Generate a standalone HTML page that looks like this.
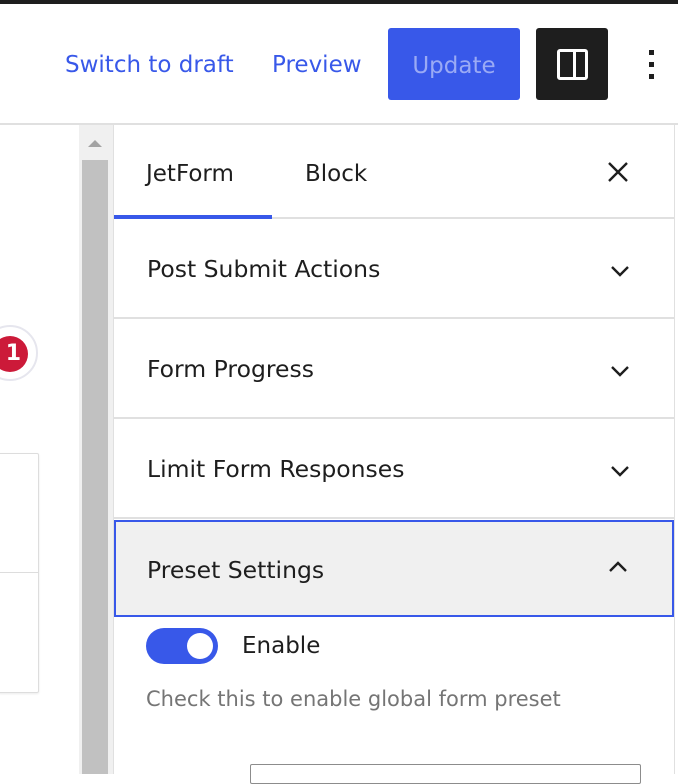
<!DOCTYPE html>
<html><head><style>
*{margin:0;padding:0;box-sizing:border-box}
body{width:678px;height:774px;overflow:hidden;background:#fff;font-family:"DejaVu Sans","Liberation Sans",sans-serif;position:relative;color:#1e1e1e}
.a{position:absolute}
.row{position:absolute;left:114px;width:560px;height:100px;border-bottom:2px solid #e0e0e0}
.row span{position:absolute;left:33px;top:36px;font-size:23.5px}
.chev{position:absolute;right:44px;top:46px}
</style></head><body>
<div class="a" style="left:0;top:0;width:678px;height:4px;background:#1e1e1e"></div>
<div class="a" style="left:0;top:123px;width:678px;height:2px;background:#e0e0e0"></div>
<div class="a" style="left:65px;top:52px;font-size:23px;color:#3858e9">Switch to draft</div>
<div class="a" style="left:272px;top:52px;font-size:23px;color:#3858e9">Preview</div>
<div class="a" style="left:388px;top:28px;width:132px;height:72px;background:#3858e9;border-radius:3px;color:#9aaaf5;font-size:23px;text-align:center;line-height:76px">Update</div>
<div class="a" style="left:536px;top:28px;width:72px;height:72px;background:#1e1e1e;border-radius:3px"></div>
<div class="a" style="left:557px;top:49px;width:31px;height:31px;border:3px solid #fff;border-radius:3px"></div>
<div class="a" style="left:573px;top:49px;width:3px;height:31px;background:#fff"></div>
<div class="a" style="left:649px;top:50px;width:5px;height:5px;background:#1e1e1e"></div>
<div class="a" style="left:649px;top:62px;width:5px;height:5px;background:#1e1e1e"></div>
<div class="a" style="left:649px;top:74px;width:5px;height:5px;background:#1e1e1e"></div>
<!-- left -->
<div class="a" style="left:-18px;top:325px;width:56px;height:56px;border-radius:50%;background:#fff;border:2px solid #e6e6ee"></div>
<div class="a" style="left:-8px;top:336px;width:36px;height:36px;border-radius:50%;background:#cc1a39;color:#fff;font-weight:bold;font-size:22px;line-height:36px;text-align:right;padding-right:7px">1</div>
<div class="a" style="left:-2px;top:453px;width:41px;height:240px;border:1px solid #ddd;border-radius:2px;box-shadow:0 1px 2px rgba(0,0,0,.08)"></div>
<div class="a" style="left:0;top:572px;width:39px;height:1px;background:#ddd"></div>
<!-- scrollbar -->
<div class="a" style="left:79px;top:125px;width:34px;height:649px;background:#f0f0f0"></div>
<div class="a" style="left:82px;top:160px;width:26px;height:614px;background:#c1c1c1"></div>
<div class="a" style="left:88px;top:140px;width:0;height:0;border-left:7px solid transparent;border-right:7px solid transparent;border-bottom:7px solid #a3a3a3"></div>
<div class="a" style="left:113px;top:125px;width:1px;height:649px;background:#e0e0e0"></div>
<div class="a" style="left:674px;top:125px;width:1px;height:649px;background:#e0e0e0"></div>
<!-- tabs -->
<div class="a" style="left:146px;top:161px;font-size:23px">JetForm</div>
<div class="a" style="left:305px;top:161px;font-size:23px">Block</div>
<svg class="a" style="left:606px;top:160px" width="24" height="24" viewBox="0 0 24 24"><path d="M3 3L21 21M21 3L3 21" stroke="#1e1e1e" stroke-width="2.4"/></svg>
<div class="a" style="left:114px;top:217px;width:560px;height:2px;background:#e0e0e0"></div>
<div class="a" style="left:114px;top:215px;width:158px;height:4px;background:#3858e9"></div>
<div class="row" style="top:219px"><span>Post Submit Actions</span><svg class="chev" width="20" height="12" viewBox="0 0 20 12"><path d="M2 2L10 10L18 2" fill="none" stroke="#1e1e1e" stroke-width="2.4"/></svg></div>
<div class="row" style="top:319px"><span>Form Progress</span><svg class="chev" width="20" height="12" viewBox="0 0 20 12"><path d="M2 2L10 10L18 2" fill="none" stroke="#1e1e1e" stroke-width="2.4"/></svg></div>
<div class="row" style="top:419px"><span>Limit Form Responses</span><svg class="chev" width="20" height="12" viewBox="0 0 20 12"><path d="M2 2L10 10L18 2" fill="none" stroke="#1e1e1e" stroke-width="2.4"/></svg></div>
<div class="a" style="left:114px;top:520px;width:560px;height:97px;background:#f0f0f0;border:2px solid #3858e9"></div>
<div class="a" style="left:147px;top:556px;font-size:23.5px">Preset Settings</div>
<svg class="a" style="left:608px;top:561px" width="20" height="12" viewBox="0 0 20 12"><path d="M2 10L10 2L18 10" fill="none" stroke="#1e1e1e" stroke-width="2.4"/></svg>
<div class="a" style="left:146px;top:628px;width:72px;height:36px;border-radius:18px;background:#3858e9"></div>
<div class="a" style="left:187px;top:633px;width:26px;height:26px;border-radius:50%;background:#fff"></div>
<div class="a" style="left:242px;top:633px;font-size:23px">Enable</div>
<div class="a" style="left:146px;top:687px;font-size:21px;color:#757575">Check this to enable global form preset</div>
<div class="a" style="left:250px;top:764px;width:391px;height:20px;border:1px solid #8c8c8c;border-radius:2px"></div>
</body></html>
